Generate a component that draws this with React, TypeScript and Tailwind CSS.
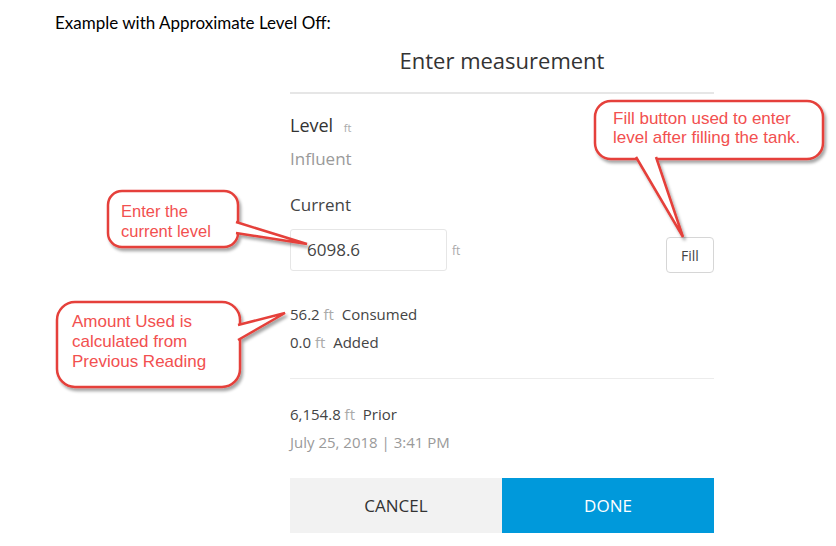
import React from "react";

// Callout bubbles: rounded box + pointer tail, drawn in one overlay svg.
type Bubble = {
  x: number; y: number; w: number; h: number; r: number;
  base: [number, number][]; // two points on the box edge
  tip: [number, number];
};

const bubbles: Bubble[] = [
  { x: 595, y: 101, w: 228, h: 58, r: 16, base: [[636, 157], [656, 157]], tip: [683, 237] },
  { x: 108, y: 191, w: 130, h: 56, r: 14, base: [[236, 222], [236, 233]], tip: [307, 244] },
  { x: 57, y: 302, w: 183, h: 85, r: 18, base: [[238, 325], [238, 340]], tip: [285, 313] },
];

const RED = "#e5403a";

function Callouts() {
  return (
    <svg className="absolute inset-0 pointer-events-none" width={836} height={546}>
      <defs>
        <filter id="sh" x="-10%" y="-10%" width="130%" height="140%">
          <feDropShadow dx="2" dy="3" stdDeviation="1.6" floodColor="#000" floodOpacity="0.35" />
        </filter>
      </defs>
      {bubbles.map((b, i) => {
        const [p1, p2] = b.base;
        const tail = `${p1[0]},${p1[1]} ${b.tip[0]},${b.tip[1]} ${p2[0]},${p2[1]}`;
        return (
          <g key={i} filter="url(#sh)">
            <rect x={b.x} y={b.y} width={b.w} height={b.h} rx={b.r} fill="#fff" stroke={RED} strokeWidth={2.5} />
            <polygon points={tail} fill="#fff" stroke="none" />
            <polyline points={tail} fill="none" stroke={RED} strokeWidth={2.5} strokeLinejoin="miter" />
          </g>
        );
      })}
    </svg>
  );
}

function Note({ className, lines }: { className: string; lines: string[] }) {
  return (
    <div className={`absolute text-[#f25050] ${className}`}
      style={{ fontFamily: '"Liberation Sans", Arial, sans-serif' }}>
      {lines.map((l, i) => <div key={i} className="whitespace-nowrap">{l}</div>)}
    </div>
  );
}

function Unit({ children }: { children: React.ReactNode }) {
  return <span className="text-[#aaaaaa]">{children}</span>;
}

export default function App() {
  return (
    <div className="relative w-[836px] h-[546px] bg-white overflow-hidden text-[#333]"
      style={{ fontFamily: '"Open Sans", sans-serif' }}>
      <p className="pl-[55px] pt-[13px] h-[32px] leading-[20px] text-[17px] text-black"
        style={{ fontFamily: "Lato, sans-serif" }}>
        Example with Approximate Level Off:
      </p>

      <div className="ml-[290px] w-[424px]">
        <h1 className="mt-[14px] h-[28px] leading-[28px] text-center text-[22px] text-[#333]">
          Enter measurement
        </h1>
        <div className="mt-[18px] h-[2px] bg-[#e6e6e6]" />

        <div className="mt-[19px] h-[24px] leading-[24px] text-[18px] text-[#333]">
          Level <span className="ml-1.5 text-[11px] text-[#aaaaaa]">ft</span>
        </div>
        <div className="mt-[10px] h-[24px] leading-[24px] text-[17px] text-[#9a9a9a]">Influent</div>

        <div className="mt-[22px] h-[24px] leading-[24px] text-[17px] text-[#444]">Current</div>
        <div className="mt-[12px] flex items-start">
          <div className="w-[157px] h-[42px] border border-[#e6e6e6] rounded-[3px] pl-[16px] flex items-center text-[17px] text-[#444]">
            6098.6
          </div>
          <span className="ml-[5px] mt-[13px] text-[12px] text-[#aaaaaa]">ft</span>
          <button className="ml-auto mt-[8px] w-[48px] h-[36px] border border-[#d6d6d6] rounded-[4px] text-[14px] text-[#444] bg-white">
            Fill
          </button>
        </div>

        <div className="mt-[30px] h-[22px] leading-[22px] text-[15px] text-[#444]">
          56.2 <Unit>ft</Unit>&nbsp; Consumed
        </div>
        <div className="mt-[6px] h-[22px] leading-[22px] text-[15px] text-[#444]">
          0.0 <Unit>ft</Unit>&nbsp; Added
        </div>
        <div className="mt-[25px] h-px bg-[#ececec]" />

        <div className="mt-[24px] h-[22px] leading-[22px] text-[15px] text-[#444]">
          6,154.8 <Unit>ft</Unit>&nbsp; Prior
        </div>
        <div className="mt-[6px] h-[22px] leading-[22px] text-[15px] text-[#9a9a9a]">
          July 25, 2018 | 3:41 PM
        </div>

        <div className="mt-[25px] grid grid-cols-2 h-[55px] text-[17px]">
          <button className="bg-[#f2f2f2] text-[#333]">CANCEL</button>
          <button className="bg-[#0099db] text-white">DONE</button>
        </div>
      </div>

      <Callouts />
      <Note className="left-[613px] top-[109px] text-[17px] leading-[19px]" lines={["Fill button used to enter", "level after filling the tank."]} />
      <Note className="left-[121px] top-[201px] text-[16.5px] leading-[20px]" lines={["Enter the", "current level"]} />
      <Note className="left-[72px] top-[312px] text-[17px] leading-[20px]" lines={["Amount Used is", "calculated from", "Previous Reading"]} />
    </div>
  );
}
